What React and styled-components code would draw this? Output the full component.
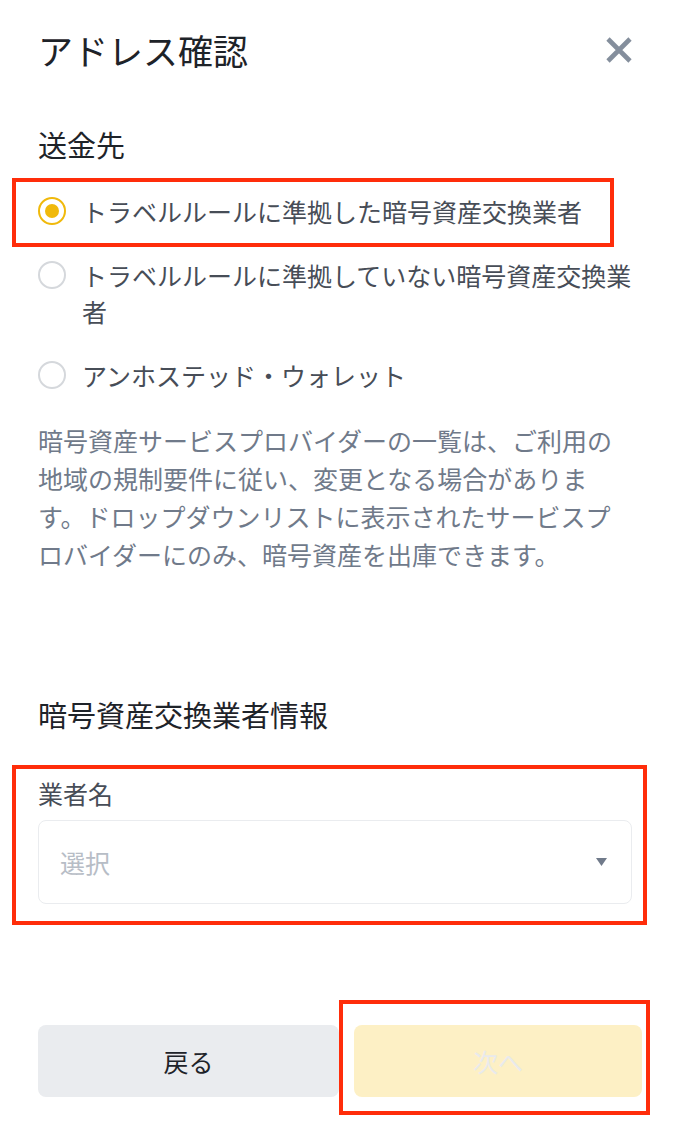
import React, { useState } from 'react';
import styled, { createGlobalStyle } from 'styled-components';

const GlobalStyle = createGlobalStyle`
	html, body {
		margin: 0;
		padding: 0;
		background: #ffffff;
	}
	body {
		font-family: "Noto Sans CJK JP", "Noto Sans", sans-serif;
		color: #1e2329;
	}
`;

const Page = styled.div`
	width: 678px;
	min-height: 1126px;
	box-sizing: border-box;
	padding: 28px 42px 0 38px;
	background: #ffffff;
`;

const Header = styled.div`
	display: flex;
	justify-content: space-between;
	align-items: center;
	height: 44px;
`;

const Title = styled.h1`
	margin: 0;
	font-size: 35px;
	line-height: 44px;
	font-weight: 400;
	color: #1e2329;
`;

const CloseBtn = styled.button`
	display: flex;
	align-items: center;
	justify-content: center;
	border: none;
	background: none;
	padding: 0;
	margin-right: 2px;
	cursor: pointer;
`;

const SectionTitle = styled.h2`
	margin: ${(p) => p.$top}px 0 0;
	font-size: 29px;
	line-height: 40px;
	font-weight: 400;
	color: #1e2329;
`;

const RadioList = styled.div`
	display: flex;
	flex-direction: column;
	gap: 28px;
	margin-top: 29px;
`;

const Marked = styled.div`
	position: relative;

	&::after {
		content: '';
		position: absolute;
		top: ${(p) => p.$t}px;
		left: ${(p) => p.$l}px;
		right: ${(p) => p.$r}px;
		bottom: ${(p) => p.$b}px;
		border: 4px solid #ff2d0a;
		pointer-events: none;
	}
`;

const RadioRow = styled.label`
	display: flex;
	align-items: flex-start;
	gap: 16px;
	font-size: 25px;
	line-height: 36px;
	color: #474d57;
	cursor: pointer;
`;

const Circle = styled.span`
	flex: none;
	width: 28px;
	height: 28px;
	margin-top: 4px;
	box-sizing: border-box;
	border-radius: 50%;
	border: 2px solid ${(p) => (p.$on ? '#f0b90b' : '#d5d8dc')};
	display: flex;
	align-items: center;
	justify-content: center;

	&::before {
		content: '';
		width: 14px;
		height: 14px;
		border-radius: 50%;
		background: ${(p) => (p.$on ? '#f0b90b' : 'transparent')};
	}
`;

const Note = styled.p`
	margin: 28px 0 0;
	max-width: 580px;
	font-size: 25px;
	line-height: 38px;
	color: #707a8a;
`;

const FieldLabel = styled.div`
	font-size: 25px;
	line-height: 36px;
	color: #474d57;
`;

const Select = styled.div`
	margin-top: 9px;
	width: 594px;
	height: 84px;
	box-sizing: border-box;
	border: 1px solid #eaecef;
	border-radius: 8px;
	display: flex;
	align-items: center;
	justify-content: space-between;
	padding: 0 24px 0 21px;
	cursor: pointer;
`;

const Placeholder = styled.span`
	font-size: 25px;
	color: #b7bdc6;
`;

const Footer = styled.div`
	display: grid;
	grid-template-columns: 301px 288px;
	gap: 15px;
	margin-top: 121px;
	width: 604px;
`;

const Button = styled.button`
	width: 100%;
	height: 72px;
	border: none;
	border-radius: 8px;
	font-family: inherit;
	font-size: 25px;
	background: ${(p) => (p.$primary ? '#fdf0c5' : '#eaecef')};
	color: ${(p) => (p.$primary ? '#e9eaec' : '#1e2329')};
	cursor: ${(p) => (p.$primary ? 'not-allowed' : 'pointer')};
`;

const options = [
	'トラベルルールに準拠した暗号資産交換業者',
	'トラベルルールに準拠していない暗号資産交換業者',
	'アンホステッド・ウォレット',
];

const App = () => {
	const [selected, setSelected] = useState(0);

	return (
		<>
			<GlobalStyle />
			<Page>
				<Header>
					<Title>アドレス確認</Title>
					<CloseBtn aria-label='close'>
						<svg width='30' height='28' viewBox='0 0 30 28'>
							<path
								d='M4 3 L26 25 M26 3 L4 25'
								stroke='#848e9c'
								strokeWidth='4.6'
								strokeLinecap='butt'
							/>
						</svg>
					</CloseBtn>
				</Header>

				<SectionTitle $top={52}>送金先</SectionTitle>
				<RadioList>
					{options.map((text, i) => {
						const row = (
							<RadioRow key={text} onClick={() => setSelected(i)}>
								<Circle $on={selected === i} />
								<span>{text}</span>
							</RadioRow>
						);
						return i === 0 ? (
							<Marked key={text} $t={-15} $l={-26} $r={22} $b={-18}>
								{row}
							</Marked>
						) : (
							row
						);
					})}
				</RadioList>

				<Note>
					暗号資産サービスプロバイダーの一覧は、ご利用の地域の規制要件に従い、変更となる場合があります。ドロップダウンリストに表示されたサービスプロバイダーにのみ、暗号資産を出庫できます。
				</Note>

				<SectionTitle $top={121}>暗号資産交換業者情報</SectionTitle>

				<Marked $t={-10} $l={-26} $r={-11} $b={-21} style={{ marginTop: 41 }}>
					<FieldLabel>業者名</FieldLabel>
					<Select>
						<Placeholder>選択</Placeholder>
						<svg width='11' height='8' viewBox='0 0 11 8'>
							<path d='M0 0 H11 L5.5 8 Z' fill='#707a8a' />
						</svg>
					</Select>
				</Marked>

				<Footer>
					<Button>戻る</Button>
					<Marked $t={-25} $l={-15} $r={-8} $b={-18}>
						<Button $primary disabled>
							次へ
						</Button>
					</Marked>
				</Footer>
			</Page>
		</>
	);
};

export default App;
